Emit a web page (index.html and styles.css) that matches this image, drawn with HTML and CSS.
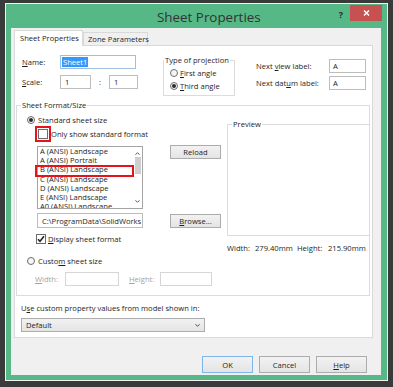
FILE: index.html
```html
<!DOCTYPE html>
<html>
<head>
<meta charset="utf-8">
<title>Sheet Properties</title>
<link rel="stylesheet" href="styles.css">
</head>
<body>
<div class="window">
  <div class="titlebar">
    <span class="title">Sheet Properties</span>
    <span class="help-q">?</span>
    <span class="close"><svg width="7" height="6" viewBox="0 0 7 6"><path d="M1 0.5 L6 5.5 M6 0.5 L1 5.5" stroke="#fff" stroke-width="1.5" fill="none"/></svg></span>
  </div>
  <div class="client">
    <div class="tabs">
      <div class="tab active">Sheet Properties</div>
      <div class="tab">Zone Parameters</div>
    </div>
    <div class="panel">
      <div class="top">
        <div class="col-a">
          <div class="row"><span class="lbl"><u>N</u>ame:</span><span class="input name"><span class="sel">Sheet1</span></span></div>
          <div class="row"><span class="lbl"><u>S</u>cale:</span><span class="input s1">1</span><span class="colon">:</span><span class="input s2">1</span></div>
        </div>
        <fieldset class="group proj">
          <legend>Type of projection</legend>
          <div class="proj-body">
            <div class="opt"><span class="radio"></span><span><u>F</u>irst angle</span></div>
            <div class="opt"><span class="radio on"></span><span><u>T</u>hird angle</span></div>
          </div>
        </fieldset>
        <div class="col-c">
          <div class="row"><span class="lbl2">Next <u>v</u>iew label:</span><span class="input abox">A</span></div>
          <div class="row"><span class="lbl2">Next dat<u>u</u>m label:</span><span class="input abox">A</span></div>
        </div>
      </div>

      <fieldset class="group sheet">
        <legend>Sheet Format/Size</legend>
        <div class="sheet-grid">
          <div class="left">
            <div class="opt r1"><span class="radio on"></span><span>Standard sheet size</span></div>
            <div class="opt r2"><span class="check marked"></span><span>Only show standard format</span></div>
            <div class="r3">
              <div class="listbox">
                <div class="items">
                  <div class="item">A (ANSI) Landscape</div>
                  <div class="item">A (ANSI) Portrait</div>
                  <div class="item">B (ANSI) Landscape</div>
                  <div class="item">C (ANSI) Landscape</div>
                  <div class="item">D (ANSI) Landscape</div>
                  <div class="item">E (ANSI) Landscape</div>
                  <div class="item">A0 (ANSI) Landscape</div>
                </div>
                <div class="scrollbar">
                  <svg class="up" width="5" height="3" viewBox="0 0 5 3"><path d="M0.5 2.7 L2.5 0.7 L4.5 2.7" stroke="#555" stroke-width="1" fill="none"/></svg>
                  <div class="thumb"></div>
                  <div class="spacer"></div>
                  <svg class="down" width="5" height="3" viewBox="0 0 5 3"><path d="M0.5 0.3 L2.5 2.3 L4.5 0.3" stroke="#555" stroke-width="1" fill="none"/></svg>
                </div>
                <div class="callout"></div>
              </div>
              <div class="btn reload">Reload</div>
            </div>
            <div class="r4">
              <div class="input path"><span class="path-text">C:\ProgramData\SolidWorks</span></div>
              <div class="btn browse"><span><u>B</u>rowse...</span></div>
            </div>
            <div class="opt r5"><span class="check on"><svg width="8" height="8" viewBox="0 0 8 8"><path d="M1 4.2 L3 6.3 L7 1.3" stroke="#222" stroke-width="1.6" fill="none"/></svg></span><span><u>D</u>isplay sheet format</span></div>
            <div class="opt r6"><span class="radio"></span><span>Custo<u>m</u> sheet size</span></div>
            <div class="r7">
              <span class="dlbl w"><u>W</u>idth:</span><span class="input dis wi"></span>
              <span class="dlbl h"><u>H</u>eight:</span><span class="input dis hi"></span>
            </div>
          </div>
          <div class="right">
            <fieldset class="group preview"><legend>Preview</legend></fieldset>
            <div class="dims"><span class="d1">Width:</span><span class="d2">279.40mm</span><span class="d3">Height:</span><span>215.90mm</span></div>
          </div>
        </div>
      </fieldset>

      <div class="usecustom">U<u>s</u>e custom property values from model shown in:</div>
      <div class="dropdown"><span>Default</span><svg width="5" height="3" viewBox="0 0 5 3"><path d="M0.5 0.3 L2.5 2.3 L4.5 0.3" stroke="#444" stroke-width="1" fill="none"/></svg></div>
    </div>
    <div class="buttons">
      <div class="btn big default">OK</div>
      <div class="btn big">Cancel</div>
      <div class="btn big"><span><u>H</u>elp</span></div>
    </div>
  </div>
</div>
</body>
</html>
```

FILE: styles.css
```css
* { box-sizing: border-box; }
html, body { margin: 0; }
body {
  width: 393px;
  height: 387px;
  overflow: hidden;
  background: #3a3a3a;
  padding: 3px 5px 6px 5px;
  font-family: "Open Sans", "Noto Sans", sans-serif;
  font-size: 7.6px;
  color: #1e1e1e;
}
u { text-decoration-thickness: 1px; text-underline-offset: 1px; }

.window {
  height: 100%;
  border: 1px solid #f2f2f2;
  background: #55b886;
  display: flex;
  flex-direction: column;
}
.titlebar {
  height: 24px;
  flex: none;
  display: flex;
  align-items: flex-start;
}
.title {
  margin-left: 151px;
  margin-top: 4px;
  font-size: 13.4px;
  line-height: 18px;
  color: #333;
}
.help-q {
  margin-left: auto;
  margin-top: 5px;
  font-size: 9px;
  font-weight: 700;
  line-height: 12px;
  color: #2a2a2a;
}
.close {
  margin: 1px 5px 0 7px;
  width: 32px;
  height: 16px;
  background: #c75050;
  display: flex;
  align-items: center;
  justify-content: center;
}

.client {
  flex: 1;
  margin: 0 6px 5px 5px;
  background: #f0f0f0;
  padding: 2px 0 0 3px;
  display: flex;
  flex-direction: column;
}
.tabs {
  height: 15px;
  display: flex;
  align-items: flex-end;
  flex: none;
}
.tab {
  border: 1px solid #d9d9d9;
  border-bottom: none;
  white-space: nowrap;
}
.tab.active {
  position: relative;
  align-self: flex-start;
  width: 69px;
  height: 16px;
  margin-bottom: -1px;
  background: #fff;
  padding: 2px 0 0 5px;
  line-height: 10px;
}
.tab:not(.active) {
  width: 65px;
  height: 13px;
  background: #f0f0f0;
  padding: 1px 0 0 4px;
  line-height: 10px;
}

.panel {
  width: 359px;
  height: 293px;
  flex: none;
  background: #fff;
  border: 1px solid #d9d9d9;
  display: flex;
  flex-direction: column;
}

.top {
  height: 54px;
  flex: none;
  display: flex;
  align-items: flex-start;
  padding: 9px 0 0 7px;
}
.col-a { width: 141px; display: flex; flex-direction: column; gap: 6px; }
.row { height: 14px; display: flex; align-items: center; }
.lbl { width: 38px; }
.input {
  height: 14px;
  border: 1px solid #bdbdbd;
  background: #fff;
  display: flex;
  align-items: center;
  white-space: nowrap;
  overflow: hidden;
}
.name { width: 76px; padding-left: 1px; border-color: #9fbfe0; }
.sel { background: #3399ff; color: #fff; line-height: 10px; padding: 0 1px; }
.s1 { width: 31px; padding-left: 4px; }
.colon { width: 18px; text-align: center; }
.s2 { width: 29px; padding-left: 4px; }

fieldset.group {
  margin: 0;
  padding: 0;
  min-width: 0;
  border: 1px solid #dcdcdc;
}
fieldset.group legend {
  padding: 0 1px;
  line-height: 10px;
  font-size: 7.6px;
}
.proj { width: 72px; margin-top: -2px; }
.proj-body { padding: 3px 0 4px 6px; display: flex; flex-direction: column; gap: 3px; }
.proj .opt { gap: 2px; }

.opt { display: flex; align-items: center; height: 10px; gap: 3px; white-space: nowrap; }
.radio {
  width: 8px;
  height: 8px;
  border: 1px solid #6d6d6d;
  border-radius: 50%;
  background: #f6f6f6;
  flex: none;
  display: flex;
  align-items: center;
  justify-content: center;
}
.radio.on::after {
  content: "";
  width: 4px;
  height: 4px;
  border-radius: 50%;
  background: #2b2b2b;
}
.check {
  width: 10px;
  height: 10px;
  border: 1px solid #6d6d6d;
  background: #fff;
  flex: none;
  display: flex;
  align-items: center;
  justify-content: center;
}
.check.marked { outline: 2px solid #e3141c; outline-offset: 1px; }

.col-c { margin-left: 21px; margin-top: 4px; display: flex; flex-direction: column; gap: 3px; }
.lbl2 { width: 73px; white-space: nowrap; }
.abox { width: 37px; padding-left: 3px; }

.sheet { width: 354px; margin-left: 1px !important; padding-bottom: 9px !important; }
.sheet > legend { margin-left: 4px; }
.sheet-grid { display: grid; grid-template-columns: 210px 1fr; }
.left { display: flex; flex-direction: column; }
.r1 { margin: 5px 0 0 10px; }
.r2 { margin: 4px 0 0 21px; }
.r3 { display: flex; align-items: flex-start; margin-top: 7px; }
.listbox {
  position: relative;
  margin-left: 20px;
  width: 106px;
  height: 63px;
  border: 1px solid #a5a5a5;
  background: #fff;
  display: flex;
}
.items { flex: 1; overflow: hidden; padding-left: 2px; }
.item { line-height: 9.2px; height: 9.2px; white-space: nowrap; }
.scrollbar {
  width: 9px;
  display: flex;
  flex-direction: column;
  align-items: center;
  background: #fff;
}
.scrollbar .up { margin-top: 5px; }
.thumb { width: 6px; height: 17px; margin-top: 2px; background: #cfcfcf; }
.spacer { flex: 1; }
.scrollbar .down { margin-bottom: 5px; }
.callout {
  position: absolute;
  left: -3px;
  top: 18px;
  width: 99px;
  height: 12px;
  border: 2px solid #e3141c;
}
.btn {
  height: 14px;
  border: 1px solid #acacac;
  background: linear-gradient(#f2f2f2, #e4e4e4);
  display: flex;
  align-items: center;
  justify-content: center;
  white-space: nowrap;
}
.reload { width: 51px; margin: -1px 0 0 27px; }
.r4 { display: flex; align-items: flex-end; margin-top: 4px; }
.path { margin-left: 20px; width: 106px; height: 15px; padding-left: 4px; }
.path-text { display: block; overflow: hidden; width: 100%; }
.browse { width: 51px; margin-left: 27px; }
.r5 { margin: 6px 0 0 19px; gap: 2px; }
.r6 { margin: 12px 0 0 10px; }
.r7 { margin-top: 6px; height: 14px; display: flex; align-items: center; }
.dlbl { color: #a3a3a3; }
.dlbl.w { margin-left: 18px; width: 30px; }
.dlbl.h { margin-left: 10px; width: 31px; }
.input.dis { border-color: #d6d6d6; }
.wi { width: 54px; }
.hi { width: 52px; }

.right { display: flex; flex-direction: column; }
.preview { margin-top: 9px !important; height: 117px; margin-right: -1px !important; }
.preview > legend { margin-left: 4px; }
.dims { margin-top: 7px; display: flex; line-height: 10px; white-space: nowrap; }
.d1 { width: 28px; }
.d2 { width: 42px; }
.d3 { width: 31px; }

.usecustom { margin: 7px 0 0 6px; line-height: 10px; white-space: nowrap; }
.dropdown {
  margin: 5px 0 0 6px;
  width: 184px;
  height: 14px;
  border: 1px solid #acacac;
  background: linear-gradient(#f2f2f2, #e4e4e4);
  display: flex;
  align-items: center;
  justify-content: space-between;
  padding: 0 4px 0 4px;
}

.buttons {
  margin-top: 18px;
  padding-right: 14px;
  display: flex;
  justify-content: flex-end;
  gap: 6px;
}
.btn.big { width: 51px; height: 17px; }
.btn.default { border-color: #7eb4ea; }
```
